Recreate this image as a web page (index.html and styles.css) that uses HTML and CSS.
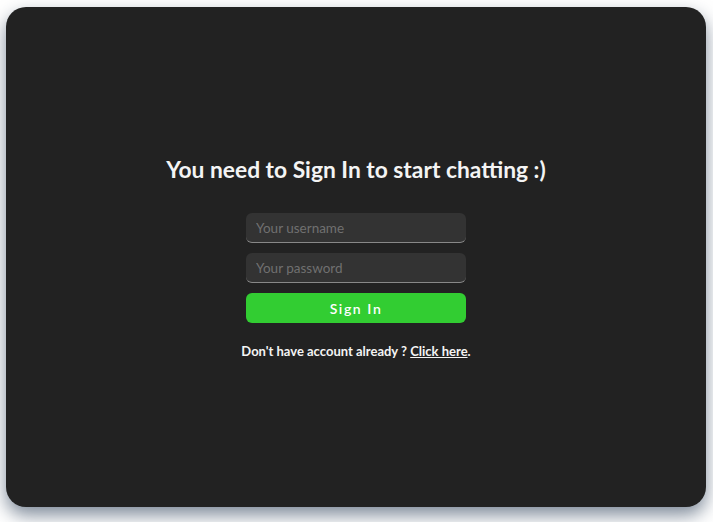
FILE: index.html
```html
<!DOCTYPE html>
<html lang="en">
<head>
    <meta charset="UTF-8">
    <meta name="viewport" content="width=device-width, initial-scale=1.0">
    <title>Chat - Sign In</title>
    <link rel="stylesheet" href="styles.css">
</head>
<body>
    <div class="chat-box">
        <h2 class="title">You need to Sign In to start chatting :)</h2>
        <form class="login-form">
            <input type="text" placeholder="Your username">
            <input type="password" placeholder="Your password">
            <button type="button">Sign In</button>
        </form>
        <p class="signup">Don't have account already ? <a href="#">Click here</a>.</p>
    </div>
</body>
</html>
```

FILE: styles.css
```css
body {
    margin: 0;
    padding: 7px 7px 15px 6px;
    background-color: #fff;
    font-family: Lato, "Open Sans", sans-serif;
}
.chat-box {
    width: 700px;
    height: 500px;
    background-color: #222;
    border-radius: 20px;
    box-shadow: 0 8px 18px rgba(40, 60, 85, 0.6);
    display: flex;
    flex-direction: column;
    align-items: center;
    justify-content: center;
    color: #fff;
}
.title {
    margin: 0 0 30px;
    font-size: 22.8px;
    font-weight: 700;
    color: #f4f4f4;
}
.login-form {
    display: flex;
    flex-direction: column;
    gap: 10px;
    width: 220px;
}
.login-form input {
    height: 30px;
    box-sizing: border-box;
    padding: 0 10px;
    border: none;
    border-bottom: 1px solid #888;
    border-radius: 6px;
    background-color: #333;
    color: #ddd;
    font-family: inherit;
    font-size: 13.5px;
    outline: none;
}
.login-form input::placeholder {
    color: #707070;
}
.login-form button {
    height: 30px;
    border: none;
    border-radius: 6px;
    background-color: #32cd32;
    color: #fff;
    font-family: inherit;
    font-size: 14px;
    font-weight: 600;
    letter-spacing: 1.6px;
    cursor: pointer;
}
.signup {
    margin: 20px 0 0;
    font-size: 13px;
    font-weight: 700;
    color: #f4f4f4;
}
.signup a {
    color: #f4f4f4;
    text-decoration: underline;
}
```
